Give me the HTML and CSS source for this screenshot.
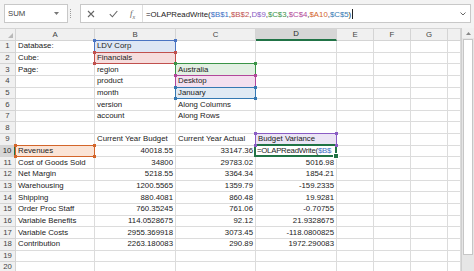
FILE: index.html
```html
<!DOCTYPE html>
<html lang="en">

<head>
    <meta charset="UTF-8">
    <title>OLAPReadWrite</title>
    <link rel="stylesheet" href="styles.css">
</head>

<body>
    <div id="excel">
        <div class="formula-bar">
            <div class="name-box">
                <span>SUM</span>
                <svg class="caret" width="5" height="3" viewBox="0 0 5 3"><path d="M0 0h5L2.5 3z" fill="#777"/></svg>
            </div>
            <div class="grip"></div>
            <div class="fbar">
                <div class="fbtns">
                    <svg class="fbtn" width="8" height="8" viewBox="0 0 8 8"><path d="M1 1l6 6M7 1l-6 6" stroke="#666" stroke-width="1.1"/></svg>
                    <svg class="fbtn" width="9" height="8" viewBox="0 0 9 8"><path d="M0.8 4.2l2.6 2.6L8.3 1" stroke="#666" stroke-width="1.1" fill="none"/></svg>
                    <span class="fbtn fx"><i>f</i><sub>x</sub></span>
                </div>
                <div class="ftext">=OLAPReadWrite(<span class="c-blue">$B$1</span>,<span class="c-red">$B$2</span>,<span class="c-purple">D$9</span>,<span class="c-green">$C$3</span>,<span class="c-magenta">$C$4</span>,<span class="c-orange">$A10</span>,<span class="c-teal">$C$5</span>)<span class="cursor"></span></div>
                <svg class="expand" width="6" height="4" viewBox="0 0 6 4"><path d="M0.5 0.5l2.5 2.5 2.5-2.5" stroke="#666" fill="none"/></svg>
            </div>
        </div>

        <div class="sheet">
            <table class="grid">
                <colgroup>
                    <col style="width:16px">
                    <col style="width:79px">
                    <col style="width:81px">
                    <col style="width:80px">
                    <col style="width:81px">
                    <col style="width:37px">
                    <col style="width:37px">
                    <col style="width:37px">
                    <col style="width:13px">
                </colgroup>
                <tr class="head">
                    <th class="corner"><span class="tri"></span></th>
                    <th>A</th><th>B</th><th>C</th><th class="sel-col">D</th><th>E</th><th>F</th><th>G</th><th></th>
                </tr>
                <tr><th>1</th><td>Database:</td><td class="ref blue">LDV Corp</td><td></td><td></td><td></td><td></td><td></td><td></td></tr>
                <tr><th>2</th><td>Cube:</td><td class="ref red">Financials</td><td></td><td></td><td></td><td></td><td></td><td></td></tr>
                <tr><th>3</th><td>Page:</td><td>region</td><td class="ref green">Australia</td><td></td><td></td><td></td><td></td><td></td></tr>
                <tr><th>4</th><td></td><td>product</td><td class="ref magenta">Desktop</td><td></td><td></td><td></td><td></td><td></td></tr>
                <tr><th>5</th><td></td><td>month</td><td class="ref teal">January</td><td></td><td></td><td></td><td></td><td></td></tr>
                <tr><th>6</th><td></td><td>version</td><td>Along Columns</td><td></td><td></td><td></td><td></td><td></td></tr>
                <tr><th>7</th><td></td><td>account</td><td>Along Rows</td><td></td><td></td><td></td><td></td><td></td></tr>
                <tr><th>8</th><td></td><td></td><td></td><td></td><td></td><td></td><td></td><td></td></tr>
                <tr><th>9</th><td></td><td>Current Year Budget</td><td>Current Year Actual</td><td class="ref purple">Budget Variance</td><td></td><td></td><td></td><td></td></tr>
                <tr><th class="sel-row">10</th><td class="ref orange">Revenues</td><td class="num">40018.55</td><td class="num">33147.36</td><td class="active"><span class="edit">=OLAPReadWrite(<span class="c-blue">$B$</span></span></td><td></td><td></td><td></td><td></td></tr>
                <tr><th>11</th><td>Cost of Goods Sold</td><td class="num">34800</td><td class="num">29783.02</td><td class="num">5016.98</td><td></td><td></td><td></td><td></td></tr>
                <tr><th>12</th><td>Net Margin</td><td class="num">5218.55</td><td class="num">3364.34</td><td class="num">1854.21</td><td></td><td></td><td></td><td></td></tr>
                <tr><th>13</th><td>Warehousing</td><td class="num">1200.5565</td><td class="num">1359.79</td><td class="num">-159.2335</td><td></td><td></td><td></td><td></td></tr>
                <tr><th>14</th><td>Shipping</td><td class="num">880.4081</td><td class="num">860.48</td><td class="num">19.9281</td><td></td><td></td><td></td><td></td></tr>
                <tr><th>15</th><td>Order Proc Staff</td><td class="num">760.35245</td><td class="num">761.06</td><td class="num">-0.70755</td><td></td><td></td><td></td><td></td></tr>
                <tr><th>16</th><td>Variable Benefits</td><td class="num">114.0528675</td><td class="num">92.12</td><td class="num">21.9328675</td><td></td><td></td><td></td><td></td></tr>
                <tr><th>17</th><td>Variable Costs</td><td class="num">2955.369918</td><td class="num">3073.45</td><td class="num">-118.0800825</td><td></td><td></td><td></td><td></td></tr>
                <tr><th>18</th><td>Contribution</td><td class="num">2263.180083</td><td class="num">290.89</td><td class="num">1972.290083</td><td></td><td></td><td></td><td></td></tr>
                <tr><th>19</th><td></td><td></td><td></td><td></td><td></td><td></td><td></td><td></td></tr>
                <tr><th>20</th><td></td><td></td><td></td><td></td><td></td><td></td><td></td><td></td></tr>
            </table>
            <div class="vscroll">
                <div class="vs-up"><svg width="5" height="3" viewBox="0 0 5 3"><path d="M0 3h5L2.5 0z" fill="#888"/></svg></div>
                <div class="vs-thumb"></div>
            </div>
        </div>
    </div>
</body>

</html>
```

FILE: styles.css
```css
body,
html {
    margin: 0;
    padding: 0;
    background-color: #fff;
}

body {
    width: 474px;
    height: 271px;
    overflow: hidden;
    font-family: "Liberation Sans", Arial, sans-serif;
    font-size: 7.8px;
    color: #222;
}

/* formula bar */

.formula-bar {
    height: 28px;
    box-sizing: border-box;
    display: flex;
    align-items: center;
    padding: 0 3px 1px 4px;
    background-color: #f3f3f3;
}

.name-box {
    width: 64px;
    height: 19px;
    box-sizing: border-box;
    display: flex;
    align-items: center;
    justify-content: space-between;
    padding: 0 8px 0 3px;
    background-color: #fff;
    border: 1px solid #c8c8c8;
    color: #444;
}

.grip {
    width: 1px;
    height: 9px;
    margin: 0 9px 0 2px;
    background-image: linear-gradient(#9a9a9a 50%, transparent 50%);
    background-size: 1px 2px;
}

.fbar {
    flex-grow: 1;
    height: 19px;
    box-sizing: border-box;
    display: flex;
    align-items: center;
    background-color: #fff;
    border: 1px solid #c8c8c8;
}

.fbtns {
    width: 62px;
    height: 100%;
    display: flex;
    align-items: center;
    padding-left: 6px;
    box-sizing: border-box;
    border-right: 1px solid #dedede;
}

.fbtn {
    margin-right: 14px;
}

.fx {
    margin-right: 0;
    margin-left: -2px;
    color: #666;
    font-family: "Liberation Serif", serif;
    font-size: 9px;
}

.fx sub {
    font-size: 6px;
    font-style: italic;
}

.ftext {
    flex-grow: 1;
    padding-left: 3px;
    white-space: nowrap;
    color: #222;
}

.cursor {
    display: inline-block;
    width: 1px;
    height: 10px;
    margin-left: 1px;
    vertical-align: -2px;
    background-color: #222;
}

.expand {
    margin-right: 4px;
}

.c-blue { color: #3c6fc4; }
.c-red { color: #c0504d; }
.c-purple { color: #8a5cc4; }
.c-green { color: #3a9447; }
.c-magenta { color: #b2479a; }
.c-orange { color: #d3652a; }
.c-teal { color: #3578b2; }

/* sheet */

.sheet {
    display: flex;
}

.grid {
    width: 461px;
    table-layout: fixed;
    border-collapse: separate;
    border-spacing: 0;
}

.grid th,
.grid td {
    box-sizing: border-box;
    height: 11.65px;
    padding: 0 2px;
    border-right: 1px solid #dcdcdc;
    border-bottom: 1px solid #dcdcdc;
    white-space: nowrap;
    line-height: 10px;
    font-weight: normal;
    text-align: left;
}

.grid th {
    padding: 0;
    text-align: center;
    background-color: #f0f0f0;
    color: #444;
    border-color: #d4d4d4;
}

.grid .head th {
    height: 10px;
    border-top: 1px solid #d4d4d4;
}

.corner {
    position: relative;
}

.tri {
    position: absolute;
    right: 2px;
    bottom: 2px;
    border-left: 5px solid transparent;
    border-bottom: 5px solid #b8b8b8;
}

.grid th.sel-col {
    background-color: #d6d6d6;
    border-bottom: 2px solid #217346;
    color: #262626;
}

.grid th.sel-row {
    background-color: #d6d6d6;
    border-right: 2px solid #217346;
    color: #262626;
}

.num {
    text-align: right !important;
}

/* reference highlights */

.ref {
    position: relative;
}

.ref::after {
    content: "";
    position: absolute;
    left: -1px;
    top: -1px;
    right: -1px;
    bottom: -1px;
    border: 1px solid var(--c);
}

.ref::before {
    content: "";
    position: absolute;
    left: -2px;
    top: -2px;
    right: -2px;
    bottom: -2px;
    z-index: 1;
    background:
        linear-gradient(var(--c), var(--c)) left top / 3px 3px no-repeat,
        linear-gradient(var(--c), var(--c)) right top / 3px 3px no-repeat,
        linear-gradient(var(--c), var(--c)) left bottom / 3px 3px no-repeat,
        linear-gradient(var(--c), var(--c)) right bottom / 3px 3px no-repeat;
}

.ref.blue { --c: #4a74c2; background-color: #dde6f4; }
.ref.red { --c: #c0504d; background-color: #f6dddd; }
.ref.green { --c: #3a9447; background-color: #e2f0e3; }
.ref.magenta { --c: #b2479a; background-color: #f4e0ef; }
.ref.teal { --c: #3578b2; background-color: #e0eaf4; }
.ref.purple { --c: #8a5cc4; background-color: #ebe4f5; }
.ref.orange { --c: #d3652a; background-color: #fbe4d6; }

.active {
    position: relative;
}

.active::after {
    content: "";
    position: absolute;
    left: -2px;
    top: -2px;
    right: -1px;
    bottom: -1px;
    border: 2px solid #217346;
}

.active::before {
    content: "";
    position: absolute;
    right: -3px;
    bottom: -3px;
    width: 4px;
    height: 4px;
    z-index: 1;
    background-color: #217346;
    border: 1px solid #fff;
}

.grid td.active {
    padding: 0 1px;
}

.edit {
    display: block;
    letter-spacing: -0.25px;
}

/* scrollbar */

.vscroll {
    width: 13px;
    height: 243px;
    background-color: #e6e6e6;
    border-left: 1px solid #cfcfcf;
    box-sizing: border-box;
}

.vs-up {
    height: 10px;
    display: flex;
    align-items: center;
    justify-content: center;
    background-color: #f0f0f0;
}

.vs-thumb {
    height: 216px;
    margin: 1px 1px 0 1px;
    background-color: #fff;
    border: 1px solid #c6c6c6;
    box-sizing: border-box;
}
```
